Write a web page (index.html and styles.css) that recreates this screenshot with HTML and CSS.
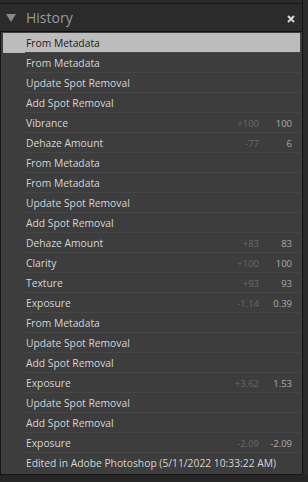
FILE: index.html
```html
<!DOCTYPE html>
<html>
<head>
	<title>History</title>
	<link rel="stylesheet" href="styles.css">
</head>
<body>

	<div class="topbar"></div>

	<div class="header">
		<span class="arrow"></span>
		<span class="title">History</span>
		<svg class="close" width="8" height="8" viewBox="0 0 8 8">
			<path d="M1 1L7 7M7 1L1 7" stroke="#d8d8d8" stroke-width="2"/>
		</svg>
	</div>

	<div class="panel">
		<div class="row active"><span class="name">From Metadata</span></div>
		<div class="row"><span class="name">From Metadata</span></div>
		<div class="row"><span class="name">Update Spot Removal</span></div>
		<div class="row"><span class="name">Add Spot Removal</span></div>
		<div class="row"><span class="name">Vibrance</span><span class="delta">+100</span><span class="val">100</span></div>
		<div class="row"><span class="name">Dehaze Amount</span><span class="delta">-77</span><span class="val">6</span></div>
		<div class="row"><span class="name">From Metadata</span></div>
		<div class="row"><span class="name">From Metadata</span></div>
		<div class="row"><span class="name">Update Spot Removal</span></div>
		<div class="row"><span class="name">Add Spot Removal</span></div>
		<div class="row"><span class="name">Dehaze Amount</span><span class="delta">+83</span><span class="val">83</span></div>
		<div class="row"><span class="name">Clarity</span><span class="delta">+100</span><span class="val">100</span></div>
		<div class="row"><span class="name">Texture</span><span class="delta">+93</span><span class="val">93</span></div>
		<div class="row"><span class="name">Exposure</span><span class="delta">-1.14</span><span class="val">0.39</span></div>
		<div class="row"><span class="name">From Metadata</span></div>
		<div class="row"><span class="name">Update Spot Removal</span></div>
		<div class="row"><span class="name">Add Spot Removal</span></div>
		<div class="row"><span class="name">Exposure</span><span class="delta">+3.62</span><span class="val">1.53</span></div>
		<div class="row"><span class="name">Update Spot Removal</span></div>
		<div class="row"><span class="name">Add Spot Removal</span></div>
		<div class="row"><span class="name">Exposure</span><span class="delta">-2.09</span><span class="val">-2.09</span></div>
		<div class="row last"><span class="name">Edited in Adobe Photoshop (5/11/2022 10:33:22 AM)</span></div>
	</div>

	<div class="bottom"></div>

</body>
</html>
```

FILE: styles.css
```css
*{
	box-sizing: border-box;
	font-family: 'Open Sans', sans-serif;
}
html,body{
	width: 100%;
	height: 100%;
}
body{
	margin: 0px;
	background: #2b2b2b;
	overflow: hidden;
}

.topbar{
	height: 4px;
	border-bottom: 1px solid #161616;
	border-right: 1px solid #161616;
	width: 303px;
}

.header{
	height: 27px;
	display: flex;
	align-items: center;
	padding: 0px 0px 0px 6px;
	width: 303px;
	border-right: 1px solid #161616;
}

.header .arrow{
	width: 0px;
	height: 0px;
	border-left: 5px solid transparent;
	border-right: 5px solid transparent;
	border-top: 8px solid #8a8a8a;
	margin-top: 1px;
}

.header .title{
	color: #9a9a9a;
	font-size: 14px;
	margin-left: 10px;
	flex: 1;
}

.header .close{
	margin-right: 7px;
	margin-top: 2px;
}

.panel{
	width: 303px;
	background: #3d3d3d;
	border: 1px solid #161616;
	border-top: 1px solid #111111;
	padding: 1px 2px 1px 2px;
}

.row{
	height: 20px;
	display: flex;
	align-items: center;
	padding-left: 23px;
	color: #d4d4d4;
	font-size: 10.3px;
	position: relative;
}

.row::after{
	content: "";
	position: absolute;
	left: 22px;
	right: 0px;
	bottom: 0px;
	height: 1px;
	background: #464646;
}

.row.last::after{
	display: none;
}

.row.active{
	background: #bcbcbc;
	color: #1a1a1a;
}

.row .name{
	flex: 1;
	white-space: nowrap;
}

.row .delta{
	color: #696969;
	font-size: 9.5px;
	width: 60px;
	text-align: right;
}

.row .val{
	color: #ababab;
	font-size: 9.5px;
	width: 41px;
	text-align: right;
	padding-right: 8px;
}

.bottom{
	height: 20px;
	background: #262626;
}
```
